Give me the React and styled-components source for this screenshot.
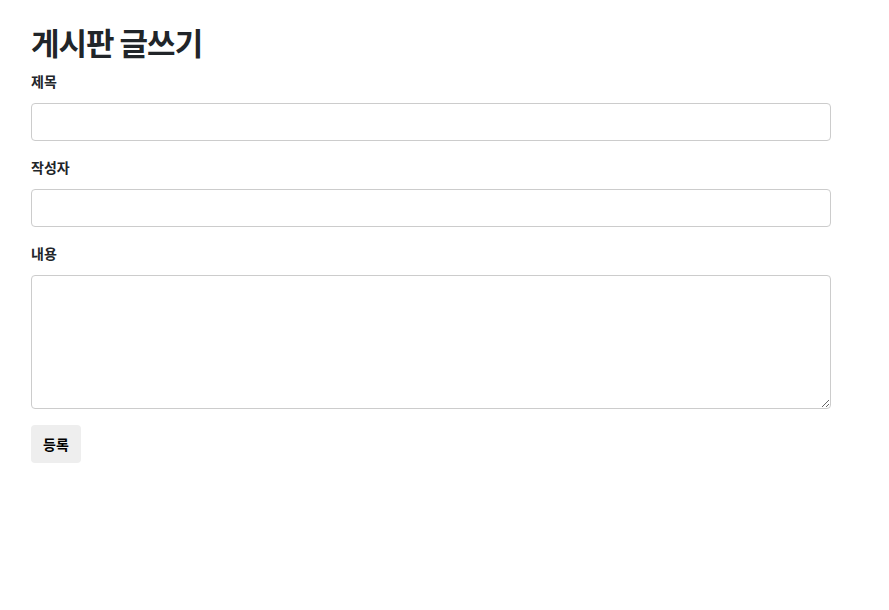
import React from "react";
import styled, { createGlobalStyle } from "styled-components";

const Global = createGlobalStyle`
  html, body { margin: 0; padding: 0; background: #fff; }
  body { font-family: "Noto Sans CJK KR", "Noto Sans", sans-serif; color: #212529; }
  * { box-sizing: border-box; }
`;

const Page = styled.div`
  width: 800px;
  margin: 0 0 0 31px;
  padding-top: 22px;
`;

const Title = styled.h1`
  margin: 0 0 9px;
  font-size: 31px;
  line-height: 40px;
  font-weight: 700;
  letter-spacing: -1px;
  color: #212529;
`;

const Field = styled.div`
  display: flex;
  flex-direction: column;
  margin-bottom: 16px;
`;

const Label = styled.label`
  font-size: 14px;
  line-height: 20px;
  font-weight: 700;
  color: #212529;
  margin-bottom: 12px;
`;

const Input = styled.input`
  width: 800px;
  height: 38px;
  border: 1px solid #ccc;
  border-radius: 4px;
  padding: 0 10px;
  font-size: 14px;
  font-family: inherit;
  outline: none;
`;

const TextArea = styled.textarea`
  width: 800px;
  height: 134px;
  border: 1px solid #ccc;
  border-radius: 4px;
  padding: 10px;
  font-size: 14px;
  font-family: inherit;
  outline: none;
`;

const Button = styled.button`
  height: 38px;
  padding: 0 12px;
  border: none;
  border-radius: 4px;
  background: #eee;
  font-family: inherit;
  font-size: 14px;
  font-weight: 700;
  color: #000;
  cursor: pointer;
`;

export default function App() {
  return (
    <>
      <Global />
      <Page>
        <Title>게시판 글쓰기</Title>
        <Field>
          <Label>제목</Label>
          <Input type="text" />
        </Field>
        <Field>
          <Label>작성자</Label>
          <Input type="text" />
        </Field>
        <Field>
          <Label>내용</Label>
          <TextArea />
        </Field>
        <Button>등록</Button>
      </Page>
    </>
  );
}
